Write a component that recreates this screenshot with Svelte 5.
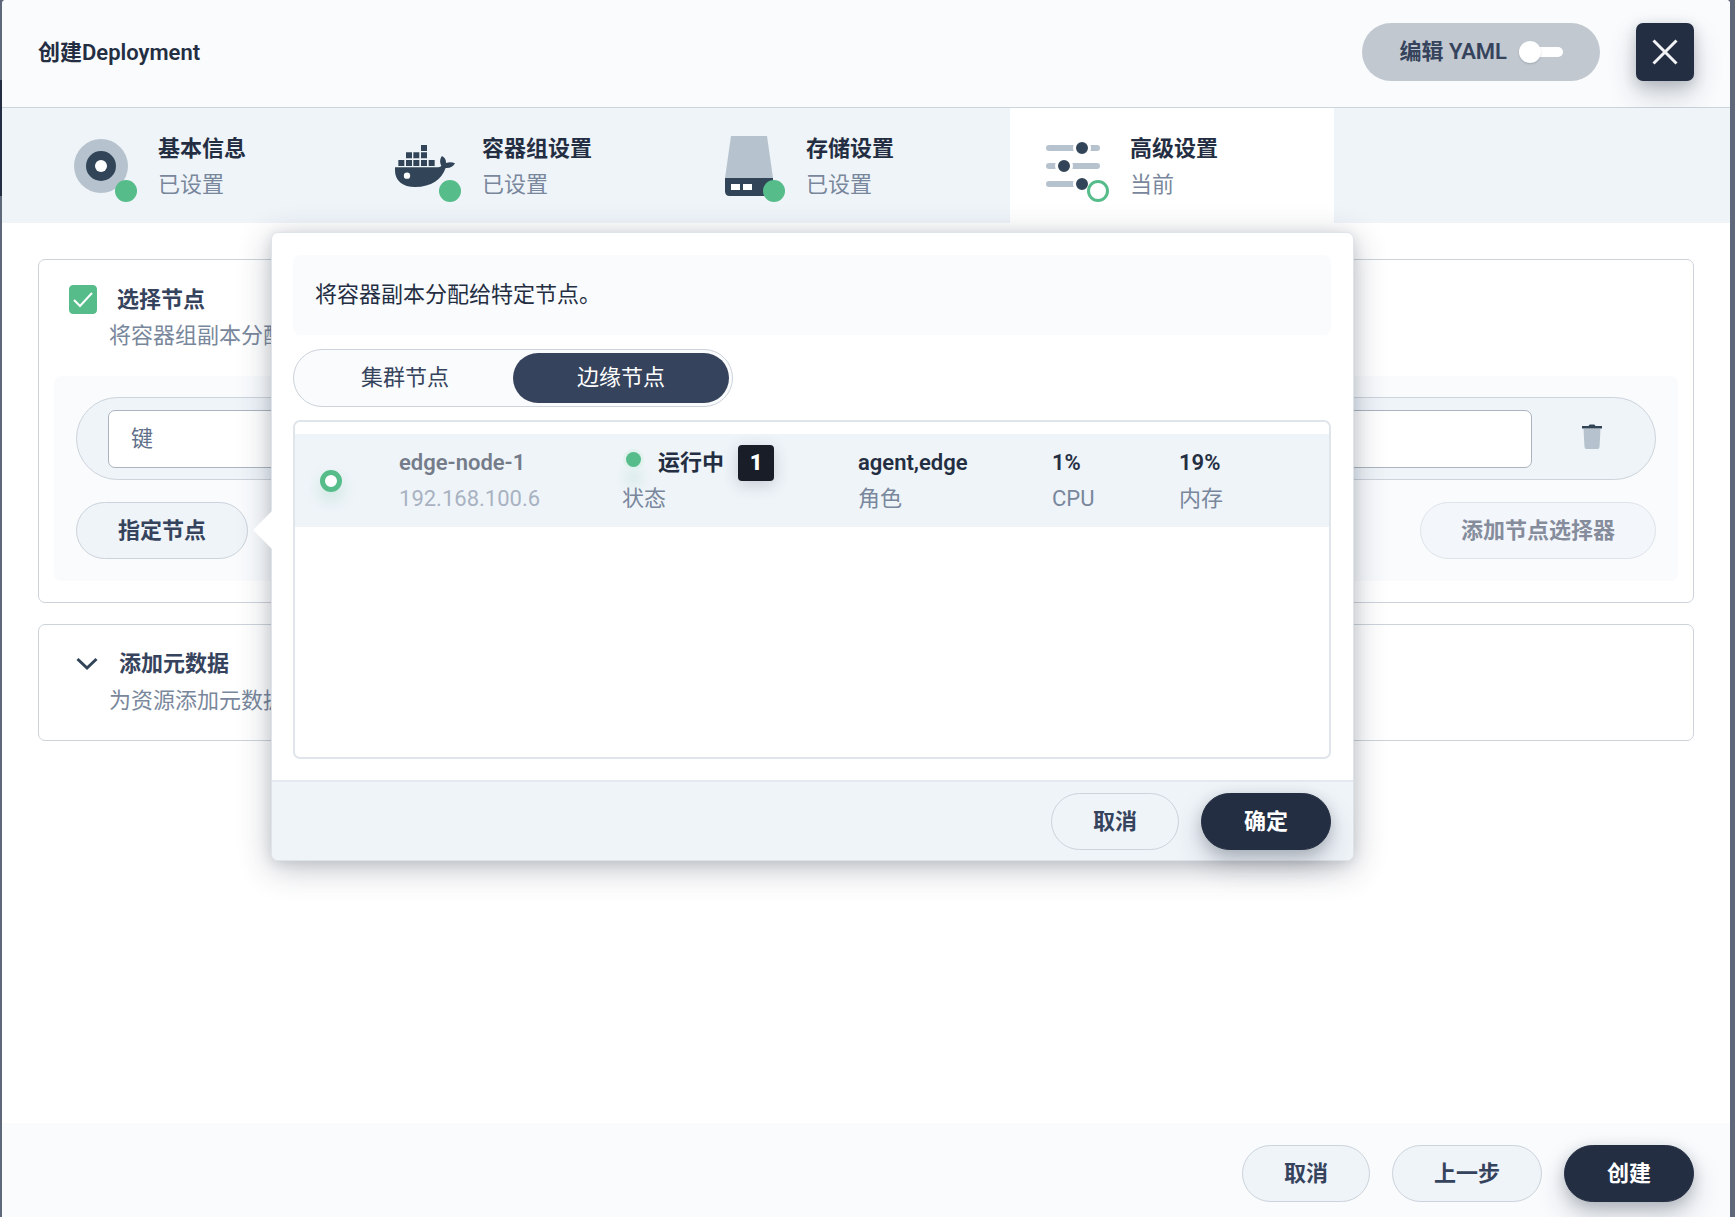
<script>
  const steps = [
    { name: '基本信息', state: '已设置', icon: 'basic' },
    { name: '容器组设置', state: '已设置', icon: 'pods' },
    { name: '存储设置', state: '已设置', icon: 'storage' },
    { name: '高级设置', state: '当前', icon: 'advanced', current: true },
  ];
  const nodeTypes = ['集群节点', '边缘节点'];
  let nodeType = $state('边缘节点');
  let yaml = $state(false);
  let selectNode = $state(true);
  let picked = $state('edge-node-1');
  const nodes = [
    { name: 'edge-node-1', ip: '192.168.100.6', status: '运行中', taints: 1, role: 'agent,edge', cpu: '1%', memory: '19%' },
  ];
</script>

<div class="overlay">
  <div class="modal" role="dialog" aria-label="创建Deployment">
    <header class="top">
      <h1>创建Deployment</h1>
      <button class="yaml" role="switch" aria-checked={yaml} onclick={() => (yaml = !yaml)}>
        编辑 YAML
        <span class="switch"><span class="knob"></span></span>
      </button>
      <button class="close" aria-label="关闭">
        <svg viewBox="0 0 26 26" width="26" height="26"><path d="M1.500 1.500 24.500 24.500M24.500 1.500 1.500 24.500" stroke="#f2f3f5" stroke-width="3" fill="none" /></svg>
      </button>
    </header>

    <nav class="steps">
      {#each steps as step}
        <button class="step" class:current={step.current}>
          <span class="icon">
            <svg viewBox="0 0 216 216" width="72" height="72">
              {#if step.icon === 'basic'}
                <circle cx="108" cy="108" r="81" fill="#b6c2cd" />
                <circle cx="108" cy="108" r="45" fill="#324558" />
                <circle cx="108" cy="108" r="18" fill="#fff" />
              {:else if step.icon === 'pods'}
                <g fill="#324558">
                  <path d="M96 45h18v18H96zM51 67h18v18H51zM73 67h18v18H73zM96 67h18v18H96zM28 90h18v18H28zM51 90h18v18H51zM73 90h18v18H73zM96 90h18v18H96zM119 90h18v18h-18z" />
                  <path d="M18 112H143C150 112 155 110 157 107C151 97 153 85 159 78C167 82 172 90 171 99C180 95 190 96 198 100C193 110 183 115 170 114C158 148 128 171 78 171C42 171 18 152 18 122Z" />
                </g>
                <circle cx="54" cy="137" r="9.500" fill="#fff" />
              {:else if step.icon === 'storage'}
                <path d="M54 18H162L180 144H36Z" fill="#b6c2cd" />
                <path d="M36 144H180V184Q180 198 166 198H50Q36 198 36 184Z" fill="#324558" />
                <path d="M54 162h27v18H54zM90 162h27v18H90z" fill="#fff" />
              {:else}
                <path d="M36 54H180M36 108H180M36 162H120" stroke="#b6c2cd" stroke-width="18" stroke-linecap="round" />
                <g fill="#324558" stroke="#fff" stroke-width="9">
                  <circle cx="135" cy="54" r="22.500" />
                  <circle cx="81" cy="108" r="22.500" />
                  <circle cx="135" cy="162" r="22.500" />
                </g>
              {/if}
            </svg>
            <i class="dot"></i>
          </span>
          <span class="lines">
            <strong>{step.name}</strong>
            <small>{step.state}</small>
          </span>
        </button>
      {/each}
    </nav>

    <main>
      <section class="card">
        <div class="card-head">
          <input id="pick-node" class="check" type="checkbox" bind:checked={selectNode} />
          <label for="pick-node">选择节点</label>
        </div>
        <p class="hint">将容器组副本分配给特定节点。</p>
        <div class="panel">
          <div class="rule">
            <input type="text" placeholder="键" aria-label="键" />
            <input type="text" placeholder="值" aria-label="值" />
            <button class="trash" aria-label="删除">
              <svg viewBox="0 0 22 26" width="22" height="26">
                <path d="M2.500 5H19.500L18.500 23Q18.400 25 16.500 25H5.500Q3.600 25 3.500 23Z" fill="#b6c2cd" />
                <path d="M1 2H7.500Q8 .5 9 .5H13Q14 .5 14.500 2H21V4.500H1Z" fill="#324558" />
              </svg>
            </button>
          </div>
          <div class="actions">
            <div class="anchor">
              <button class="pill">指定节点</button>
              <div class="popover" role="dialog" aria-label="指定节点">
                <div class="pop-body">
                  <p class="info">将容器副本分配给特定节点。</p>
                  <div class="segment">
                    {#each nodeTypes as type}
                      <button class:active={nodeType === type} onclick={() => (nodeType = type)}>{type}</button>
                    {/each}
                  </div>
                  <div class="list">
                    {#each nodes as node}
                      <label class="node">
                        <input type="radio" name="node" value={node.name} bind:group={picked} />
                        <span class="lines faded"><strong>{node.name}</strong><small>{node.ip}</small></span>
                        <span class="lines">
                          <strong class="status"><i class="light"></i>{node.status}<b class="badge">{node.taints}</b></strong>
                          <small>状态</small>
                        </span>
                        <span class="lines"><strong>{node.role}</strong><small>角色</small></span>
                        <span class="lines"><strong>{node.cpu}</strong><small>CPU</small></span>
                        <span class="lines"><strong>{node.memory}</strong><small>内存</small></span>
                      </label>
                    {/each}
                  </div>
                </div>
                <div class="pop-foot">
                  <button class="pill">取消</button>
                  <button class="pill primary">确定</button>
                </div>
              </div>
            </div>
            <button class="pill muted" disabled>添加节点选择器</button>
          </div>
        </div>
      </section>

      <section class="card">
        <button class="card-head expand">
          <svg viewBox="0 0 22 14" width="22" height="14"><path d="M1.500 2 11 11 20.500 2" stroke="#324558" stroke-width="3" fill="none" /></svg>
          添加元数据
        </button>
        <p class="hint">为资源添加元数据。</p>
      </section>
    </main>

    <footer>
      <button class="pill">取消</button>
      <button class="pill">上一步</button>
      <button class="pill primary">创建</button>
    </footer>
  </div>
</div>

<style>
  :global(body) {
    margin: 0;
    background: #5f687b;
  }
  .overlay,
  .overlay * {
    box-sizing: border-box;
  }
  .overlay {
    min-height: 100vh;
    display: flex;
    padding: 0 5px 0 2px;
    overflow: hidden;
    background: linear-gradient(#5f687b 80px, #242e42 80px 196px, #5f687b 196px) left / 2px 100% no-repeat;
    font: 400 22px/36px Roboto, 'Noto Sans CJK SC', sans-serif;
    color: #242e42;
  }
  button,
  input {
    font: inherit;
    color: inherit;
    margin: 0;
  }
  button {
    border: 0;
    padding: 0;
    background: none;
    cursor: pointer;
    white-space: nowrap;
  }
  p,
  h1 {
    margin: 0;
  }
  svg {
    display: block;
  }
  .modal {
    flex: 1;
    min-width: 0;
    display: flex;
    flex-direction: column;
    background: #fff;
    border-radius: 4px 4px 0 0;
  }
  .top {
    display: flex;
    align-items: center;
    gap: 36px;
    padding: 23px 36px 26px;
    background: #f9fbfd;
    border-bottom: 1px solid #ccd3db;
    border-radius: 4px 4px 0 0;
  }
  h1 {
    flex: 1;
    padding-top: 2px;
    font-size: 22px;
    line-height: 36px;
    font-weight: 600;
  }
  .yaml {
    display: flex;
    align-items: center;
    gap: 12px;
    height: 58px;
    padding: 0 37px 0 38px;
    border-radius: 29px;
    background: #c1c8d0;
    color: #36435c;
    font-weight: 600;
  }
  .switch {
    display: flex;
    align-items: center;
    width: 44px;
    height: 10px;
    border-radius: 5px;
    background: #fff;
  }
  .knob {
    width: 22px;
    height: 22px;
    flex: none;
    border-radius: 50%;
    background: #fff;
    box-shadow: 0 1px 2px rgba(36, 46, 66, 0.2);
  }
  .close {
    display: grid;
    place-items: center;
    width: 58px;
    height: 58px;
    border-radius: 7px;
    background: #242e42;
    box-shadow: 0 14px 28px rgba(36, 46, 66, 0.22), 0 4px 14px rgba(36, 46, 66, 0.2);
  }
  .steps {
    display: flex;
    padding: 0 36px;
    background: #eff4f9;
  }
  .step {
    display: flex;
    align-items: center;
    gap: 21px;
    width: 324px;
    height: 115px;
    padding-left: 27px;
    text-align: left;
  }
  .step.current {
    background: #fff;
  }
  .step .lines {
    padding-top: 2px;
  }
  .icon {
    position: relative;
  }
  .dot {
    position: absolute;
    right: 0;
    bottom: 0;
    width: 22px;
    height: 22px;
    border-radius: 50%;
    background: #55bc8a;
  }
  .current .dot {
    border: 3px solid #55bc8a;
    background: #fff;
  }
  .lines {
    display: flex;
    flex-direction: column;
    align-items: flex-start;
  }
  .lines strong {
    font-weight: 600;
  }
  .lines small {
    font-size: 22px;
    color: #79879c;
  }
  main {
    flex: 1;
    display: flex;
    flex-direction: column;
    gap: 21px;
    padding: 36px;
  }
  .card {
    padding: 21px 15px;
    border: 1px solid #ccd3db;
    border-radius: 7px;
  }
  .card-head {
    display: flex;
    align-items: center;
    gap: 20px;
    height: 36px;
    padding-left: 15px;
    color: #36435c;
    font-weight: 600;
  }
  .card-head label {
    padding-top: 2px;
  }
  .check {
    appearance: none;
    width: 28px;
    height: 29px;
    border-radius: 4px;
    border: 1px solid #55bc8a;
  }
  .check:checked {
    background: #55bc8a url("data:image/svg+xml,%3Csvg xmlns='http://www.w3.org/2000/svg' viewBox='0 0 26 27'%3E%3Cpath d='M4 14l6 6L22 7' fill='none' stroke='white' stroke-width='2'/%3E%3C/svg%3E") center / 26px 27px no-repeat;
  }
  .hint {
    padding: 1px 0 0 55px;
    color: #79879c;
  }
  .panel {
    margin-top: 22px;
    padding: 21px 22px 22px;
    border-radius: 7px;
    background: #f9fbfd;
  }
  .rule {
    display: flex;
    gap: 22px;
    padding: 12px 0 11px 31px;
    border: 1px solid #ccd3db;
    border-radius: 42px;
    background: #eff4f9;
  }
  .rule input {
    flex: 1;
    min-width: 0;
    height: 58px;
    padding: 0 22px 2px;
    border: 1px solid #abb4be;
    border-radius: 7px;
    background: #fff;
  }
  .rule input::placeholder {
    color: #5f708a;
    opacity: 1;
  }
  .trash {
    display: grid;
    justify-items: center;
    align-content: center;
    width: 76px;
    height: 54px;
    margin-right: 25px;
  }
  .actions {
    display: flex;
    justify-content: space-between;
    margin-top: 22px;
  }
  .anchor {
    position: relative;
  }
  .pill {
    height: 57px;
    padding: 0 41px;
    border: 1px solid #ccd3db;
    border-radius: 29px;
    background: #eff4f9;
    color: #36435c;
    font-weight: 700;
  }
  .pill.primary {
    padding: 0 42px;
    border-color: #242e42;
    background: #242e42;
    color: #fff;
    box-shadow: 0 14px 28px rgba(36, 46, 66, 0.22), 0 4px 14px rgba(36, 46, 66, 0.2);
  }
  .pill.muted {
    padding: 0 40px;
    border-color: #dfe4ea;
    background: #f3f6fb;
    color: #858c9b;
  }
  .expand {
    gap: 21px;
    padding-left: 22px;
  }
  .popover {
    position: absolute;
    z-index: 2;
    left: calc(100% + 23px);
    top: -270px;
    width: 1083px;
    border: 1px solid #dfe4ea;
    border-radius: 7px;
    background: #fff;
    box-shadow: 0 7px 32px rgba(36, 46, 66, 0.3), 0 2px 12px rgba(36, 46, 66, 0.1);
  }
  .popover::before {
    content: '';
    position: absolute;
    left: -19px;
    top: 277px;
    border: solid transparent;
    border-width: 20px 20px 20px 0;
    border-right-color: #fff;
  }
  .pop-body {
    padding: 22px 22px 21px 21px;
  }
  .info {
    padding: 22px;
    border-radius: 7px;
    background: #f9fbfd;
  }
  .segment {
    display: inline-flex;
    margin: 14px 0 13px;
    padding: 3px;
    border: 1px solid #ccd3db;
    border-radius: 30px;
    background: #f9fbfd;
    vertical-align: top;
  }
  .segment button {
    width: 216px;
    height: 50px;
    border-radius: 25px;
    color: #36435c;
  }
  .segment .active {
    background: #36435c;
    color: #fff;
  }
  .list {
    min-height: 339px;
    padding: 12px 0;
    border: 2px solid #e0e5eb;
    border-radius: 7px;
  }
  .node {
    display: grid;
    grid-template-columns: 104px 223px 236px 194px 127px 1fr;
    align-items: center;
    padding: 11px 0 10px;
    background: #eff4f9;
  }
  .node input {
    appearance: none;
    width: 22px;
    height: 22px;
    margin-left: 25px;
    border: 5px solid #55bc8a;
    border-radius: 50%;
    background: #fff;
    box-shadow: 0 8px 16px rgba(85, 188, 138, 0.24);
  }
  .faded {
    opacity: 0.6;
  }
  .status {
    display: flex;
    align-items: center;
    height: 36px;
  }
  .light {
    width: 15px;
    height: 15px;
    margin: 0 17px 8px 4px;
    border-radius: 50%;
    background: #55bc8a;
    box-shadow: 0 0 0 3px #e1f1ee, 0 18px 14px rgba(85, 188, 138, 0.2);
  }
  .badge {
    width: 36px;
    height: 36px;
    margin-left: 14px;
    border-radius: 4px;
    background: #181d28;
    color: #fff;
    text-align: center;
    box-shadow: 0 4px 16px rgba(36, 46, 66, 0.2);
  }
  .pop-foot {
    display: flex;
    justify-content: flex-end;
    gap: 22px;
    padding: 11px 22px 10px;
    border-top: 2px solid #e3e9ef;
    border-radius: 0 0 6px 6px;
    background: #eff4f9;
  }
  footer {
    display: flex;
    justify-content: flex-end;
    gap: 22px;
    padding: 22px 36px 15px;
    background: #f9fbfd;
  }
</style>
